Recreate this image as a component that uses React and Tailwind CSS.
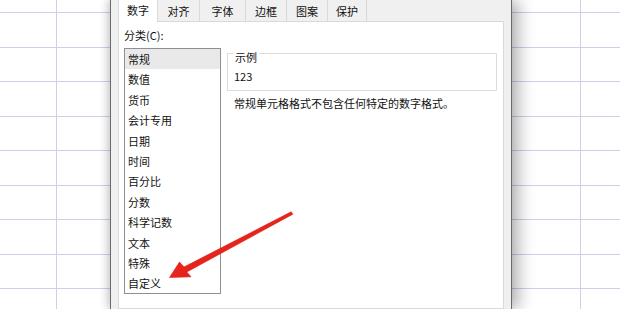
const tabs = [
    { label: '数字', w: 'w-[40px]', active: true },
    { label: '对齐', w: 'w-[42px]' },
    { label: '字体', w: 'w-[46px]' },
    { label: '边框', w: 'w-[41px]' },
    { label: '图案', w: 'w-[41px]' },
    { label: '保护', w: 'w-[39px]' },
];

const categories = ['常规', '数值', '货币', '会计专用', '日期', '时间', '百分比', '分数', '科学记数', '文本', '特殊', '自定义'];

// a column of spreadsheet cells, first line sits at y=12
function SheetColumn({ className }) {
    return (
        <div className={'flex flex-col ' + className}>
            <div className="h-[13px] shrink-0 border-b border-[#cfcfe8]"></div>
            {Array.from({ length: 9 }).map((_, i) => (
                <div key={i} className="h-[34.5px] shrink-0 border-b border-[#cfcfe8]"></div>
            ))}
        </div>
    );
}

export default function App() {
    return (
        <div className="relative w-[620px] h-[309px] overflow-hidden flex bg-white font-['Noto_Sans_CJK_SC','Noto_Sans',sans-serif] text-[11px] text-[#111111]">
            {/* sheet on the left */}
            <div className="w-[110px] shrink-0 flex">
                <SheetColumn className="w-[57px] border-r border-[#cfcfe8]" />
                <SheetColumn className="flex-1" />
            </div>

            {/* format cells dialog */}
            <div className="relative z-10 w-[402px] shrink-0 flex flex-col bg-[#f0f0f0] border-x border-[#6a6a6a] shadow-[6px_0_16px_rgba(0,0,0,0.32),-3px_0_7px_rgba(0,0,0,0.12)]">
                <div className="h-[21px] shrink-0 pl-[7px] flex items-end">
                    {tabs.map((t) =>
                        t.active ? (
                            <div key={t.label} className={t.w + ' relative z-10 h-[22px] -mb-px bg-white border-x border-[#d9d9d9] flex items-center justify-center pb-[1px]'}>
                                {t.label}
                            </div>
                        ) : (
                            <div key={t.label} className={t.w + ' h-[21px] border-r border-[#d9d9d9] flex items-center justify-center pt-[1px]'}>
                                {t.label}
                            </div>
                        )
                    )}
                </div>

                <div className="flex-1 mx-[7px] bg-white border border-[#d9d9d9] flex">
                    {/* category list */}
                    <div className="pl-[5px] pt-[5px] flex flex-col">
                        <div className="h-[16px] leading-[16px] mb-[5px]">分类(C):</div>
                        <div className="w-[97px] h-[246px] border border-[#8e8f93] bg-white flex flex-col">
                            {categories.map((c, i) => (
                                <div key={c} className={'h-[20.4px] shrink-0 leading-[20.4px] pl-[3px] ' + (i === 0 ? 'bg-[#e9e9e9]' : '')}>
                                    {c}
                                </div>
                            ))}
                        </div>
                    </div>

                    {/* sample + description */}
                    <div className="pl-[6px] pt-[31px] flex flex-col">
                        <div className="relative w-[270px] h-[38px] border border-[#dcdcdc] pl-[6px] pt-[14px]">
                            <span className="absolute left-[5px] top-[-4px] px-[2px] bg-white leading-[14px]">示例</span>
                            <div className="leading-[16px]">123</div>
                        </div>
                        <div className="mt-[4px] pl-[7px] leading-[16px] whitespace-nowrap">常规单元格格式不包含任何特定的数字格式。</div>
                    </div>
                </div>
            </div>

            {/* sheet on the right */}
            <div className="flex-1 flex">
                <SheetColumn className="w-[69px] border-r border-[#cfcfe8]" />
                <SheetColumn className="flex-1" />
            </div>

            {/* red annotation arrow */}
            <svg className="absolute inset-0 z-20 pointer-events-none" width="620" height="309" viewBox="0 0 620 309">
                <polygon
                    fill="#e8231b"
                    stroke="#d11a14"
                    strokeWidth="0.6"
                    strokeLinejoin="round"
                    points="292.8,214.2 291.2,211.8 184,267 179.5,262 169.5,277.5 191,276.8 186.8,272"
                />
            </svg>
        </div>
    );
}
